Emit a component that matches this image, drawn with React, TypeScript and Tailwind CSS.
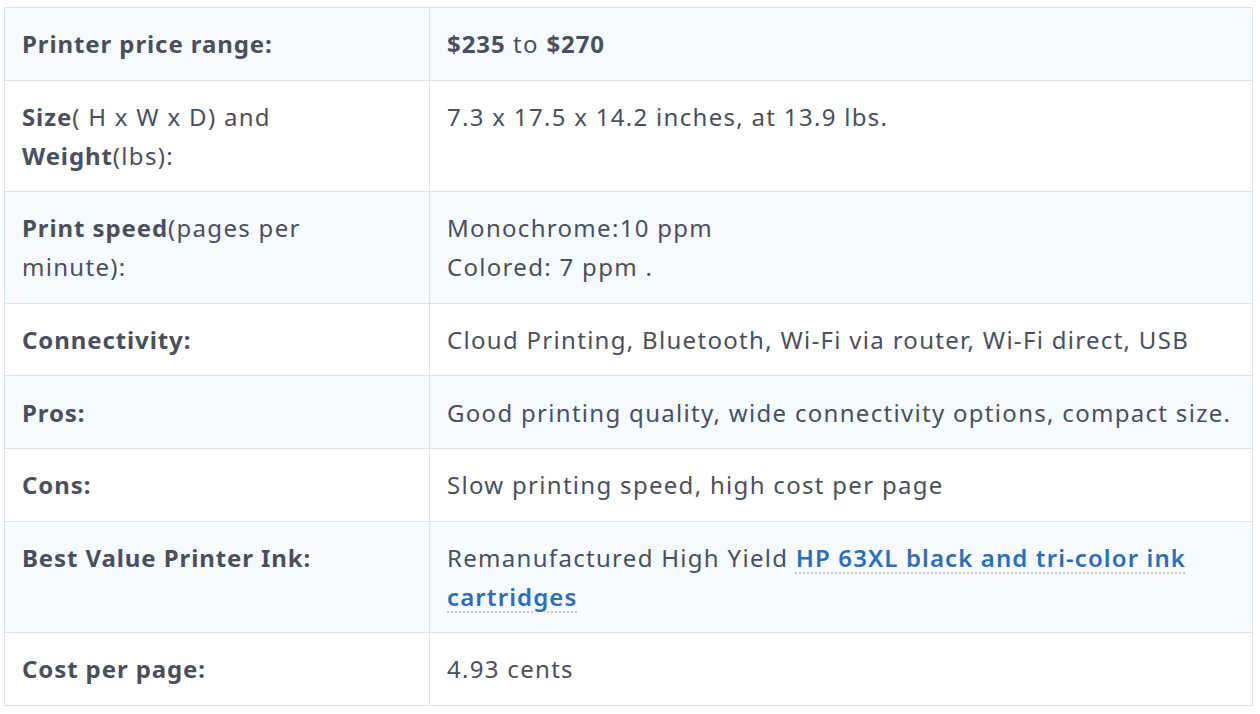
import React from 'react'

type Row = { label: React.ReactNode, value: React.ReactNode }

const B = ({ children }: { children: React.ReactNode }) => <b className="font-bold tracking-[0.9px]">{children}</b>

const ROWS: Row[] = [
  { label: <B>Printer price range:</B>, value: <><B>$235</B> to <B>$270</B></> },
  { label: <><B>Size</B>( H x W x D) and <B>Weight</B>(lbs):</>, value: '7.3 x 17.5 x 14.2 inches, at 13.9 lbs.' },
  { label: <><B>Print speed</B>(pages per minute):</>, value: <>Monochrome:10 ppm<br />Colored: 7 ppm .</> },
  { label: <B>Connectivity:</B>, value: 'Cloud Printing, Bluetooth, Wi-Fi via router, Wi-Fi direct, USB' },
  { label: <B>Pros:</B>, value: 'Good printing quality, wide connectivity options, compact size.' },
  { label: <B>Cons:</B>, value: 'Slow printing speed, high cost per page' },
  {
    label: <B>Best Value Printer Ink:</B>,
    value: <>Remanufactured High Yield <a href="#" className="font-semibold tracking-[1.1px] text-[#2f6db5] underline decoration-dotted decoration-[#c4c9d0] decoration-2 underline-offset-[6px]">HP 63XL black and tri-color ink cartridges</a></>,
  },
  { label: <B>Cost per page:</B>, value: '4.93 cents' },
]

export default function App() {
  return (
    <div className="bg-white min-h-screen pt-[7px] px-[4px]" style={{ fontFamily: '"Noto Sans", Lato, sans-serif' }}>
      <table className="w-[1249px] border-collapse text-[24px] leading-[39px] tracking-[1.3px] text-[#4b4f5c]">
        <tbody>
          {ROWS.map((r, i) => (
            <tr key={i} className={i % 2 === 0 ? 'bg-[#f5faff]' : 'bg-white'}>
              <td className="w-[425px] border border-[#e1e5ea] px-[17px] py-[16.3px] align-top">{r.label}</td>
              <td className="border border-[#e1e5ea] px-[17px] py-[16.3px] align-top">{r.value}</td>
            </tr>
          ))}
        </tbody>
      </table>
    </div>
  )
}
